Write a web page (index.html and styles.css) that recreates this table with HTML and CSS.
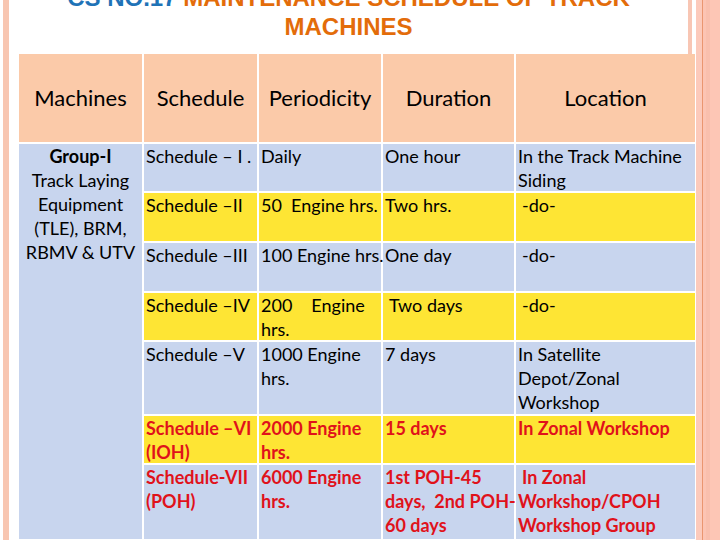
FILE: index.html
```html
<!DOCTYPE html>
<html lang="en">
<head>
<meta charset="utf-8">
<title>CS NO.17 Maintenance Schedule of Track Machines</title>
<link rel="stylesheet" href="styles.css">
</head>
<body>
<div class="slide">
  <div class="edge-left"></div>
  <main class="content">
    <header class="title-box">
      <h1 class="title"><span class="title-code">CS NO.17</span> MAINTENANCE SCHEDULE OF TRACK MACHINES</h1>
    </header>
    <div class="schedule">
      <div class="cell head">Machines</div>
      <div class="cell head">Schedule</div>
      <div class="cell head">Periodicity</div>
      <div class="cell head">Duration</div>
      <div class="cell head">Location</div>

      <div class="cell blue machines"><b>Group-I</b><br>Track Laying<br>Equipment<br>(TLE), BRM,<br>RBMV &amp; UTV</div>

      <div class="cell blue">Schedule – I .</div>
      <div class="cell blue">Daily</div>
      <div class="cell blue">One hour</div>
      <div class="cell blue">In the Track Machine<br>Siding</div>

      <div class="cell yellow">Schedule –II</div>
      <div class="cell yellow nowrap">50&nbsp; Engine hrs.</div>
      <div class="cell yellow">Two hrs.</div>
      <div class="cell yellow"><span class="indent">-do-</span></div>

      <div class="cell blue">Schedule –III</div>
      <div class="cell blue nowrap">100 Engine hrs.</div>
      <div class="cell blue">One day</div>
      <div class="cell blue"><span class="indent">-do-</span></div>

      <div class="cell yellow">Schedule –IV</div>
      <div class="cell yellow"><span class="spread">200</span>Engine<br>hrs.</div>
      <div class="cell yellow"><span class="indent">Two days</span></div>
      <div class="cell yellow"><span class="indent">-do-</span></div>

      <div class="cell blue">Schedule –V</div>
      <div class="cell blue">1000 Engine<br>hrs.</div>
      <div class="cell blue">7 days</div>
      <div class="cell blue">In Satellite<br>Depot/Zonal<br>Workshop</div>

      <div class="cell yellow red">Schedule –VI<br>(IOH)</div>
      <div class="cell yellow red">2000 Engine<br>hrs.</div>
      <div class="cell yellow red">15 days</div>
      <div class="cell yellow red nowrap">In Zonal Workshop</div>

      <div class="cell blue red">Schedule-VII<br>(POH)</div>
      <div class="cell blue red">6000 Engine<br>hrs.</div>
      <div class="cell blue red nowrap">1st POH-45<br>days,&nbsp; 2nd POH-<br>60 days</div>
      <div class="cell blue red nowrap"><span class="indent">In Zonal</span><br>Workshop/CPOH<br>Workshop Group</div>
    </div>
  </main>
  <div class="edge-right"></div>
</div>
</body>
</html>
```
FILE: styles.css
```css
html, body {
  margin: 0;
  padding: 0;
  background: #ffffff;
}

body {
  width: 720px;
  height: 540px;
  overflow: hidden;
}

.slide {
  display: flex;
  width: 720px;
  height: 540px;
  background: #ffffff;
}

.edge-left {
  flex: 0 0 6px;
  margin-left: 3px;
  background: #f8c6b1;
}

.content {
  flex: 1 1 auto;
  min-width: 0;
  background: #ffffff;
}

.edge-right {
  flex: 0 0 24px;
  background: linear-gradient(to right,
    #fccabb 0, #fccabb 6px,
    #ea9670 6px, #ea9670 7px,
    #fcc4b3 7px, #fcc4b3 10px,
    #f9bfad 10px, #f9bfad 14px,
    #fdc6b5 14px);
}

.title-box {
  display: flow-root;
  height: 54px;
  margin-right: 4px;
  border-right: 4px solid #f8c6b4;
  box-sizing: border-box;
}

.title {
  margin: -17px 0 0;
  font-family: "Liberation Sans", Arial, sans-serif;
  font-weight: 700;
  font-size: 24px;
  line-height: 29px;
  text-align: center;
  color: #e36c0a;
}

.title-code {
  color: #1f73b7;
}

.schedule {
  display: grid;
  grid-template-columns: 123px 113px 122px 131px 179px;
  grid-template-rows: 88px 47px 48px 48px 47px 72px 47px 74px;
  gap: 2px;
  width: 676px;
  margin-left: 10px;
  background: #ffffff;
  font-family: Lato, "Open Sans", sans-serif;
  font-size: 18px;
  line-height: 24px;
  color: #000000;
}

.cell {
  padding: 0 2px;
  overflow: visible;
}

.head {
  display: flex;
  align-items: center;
  justify-content: center;
  background: #fbcaa9;
  font-size: 22px;
  padding: 0;
}

.blue {
  background: #c8d5ee;
}

.yellow {
  background: #fee534;
}

.machines {
  grid-row: 2 / span 7;
  text-align: center;
}

.red {
  color: #e0121b;
  font-weight: 700;
}

.nowrap {
  white-space: nowrap;
}

.indent {
  margin-left: 4px;
}

.spread {
  margin-right: 19px;
}
```
